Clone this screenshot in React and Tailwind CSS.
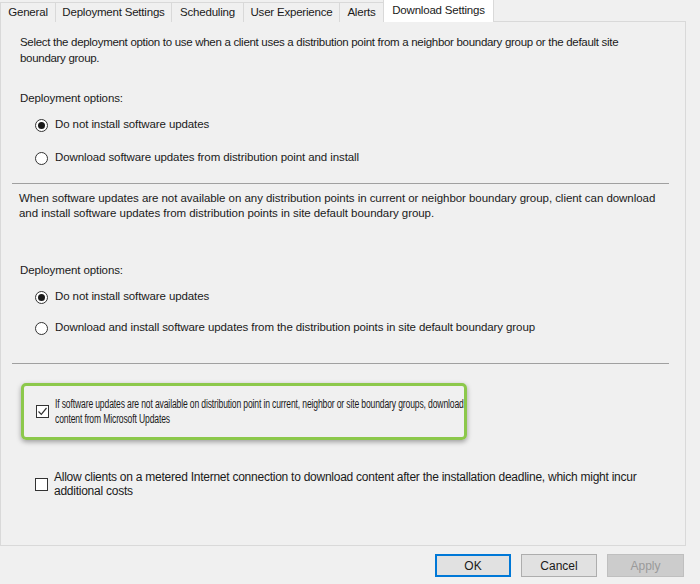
import React from "react";

function Radio({ checked }) {
  return (
    <span className="w-[13px] h-[13px] rounded-full border border-[#333] bg-white flex items-center justify-center shrink-0">
      {checked && <span className="w-[7px] h-[7px] rounded-full bg-[#1a1a1a]" />}
    </span>
  );
}

function Check({ checked }) {
  return (
    <span className="w-[13px] h-[13px] border border-[#333] bg-white flex items-center justify-center shrink-0">
      {checked && (
        <svg width="11" height="11" viewBox="0 0 11 11">
          <path d="M1.5 5.5 L4.3 8.3 L9.5 2" fill="none" stroke="#333" strokeWidth="1.2" />
        </svg>
      )}
    </span>
  );
}

export default function App() {
  const tabs = [
    ["General", "w-[56px]"],
    ["Deployment Settings", "w-[117px]"],
    ["Scheduling", "w-[73px]"],
    ["User Experience", "w-[97px]"],
    ["Alerts", "w-[45px]"],
  ];
  return (
    <div
      className="w-[700px] h-[584px] bg-[#f0f0f0] text-[#1a1a1a] text-[11.5px] overflow-hidden relative"
      style={{ fontFamily: '"Liberation Sans", Arial, sans-serif' }}
    >
      <div className="flex h-[22px] items-end tracking-[-0.2px]">
        {tabs.map(([t, w]) => (
          <div
            key={t}
            className={`${w} h-[20px] border border-b-0 border-[#d9d9d9] -ml-px first:ml-0 flex items-center justify-center bg-[#f0f0f0]`}
          >
            {t}
          </div>
        ))}
        <div className="w-[111px] h-[23px] border border-b-0 border-[#d9d9d9] -ml-px bg-white flex items-center justify-center relative z-10">
          Download Settings
        </div>
      </div>
      <div className="w-[686px] h-[525px] border border-[#d9d9d9] -mt-px bg-[#f0f0f0] flex flex-col">
        <div className="pl-[19px] pr-[30px] pt-[12px] leading-[16px] tracking-[-0.3px]">
          Select the deployment option to use when a client uses a distribution point from a neighbor boundary group or the default site boundary group.
        </div>
        <div className="pl-[19px] mt-[24px] leading-[16px] tracking-[-0.1px]">Deployment options:</div>
        <div className="pl-[34px] mt-[11px] flex items-center gap-[7px] h-[16px] tracking-[-0.1px]">
          <Radio checked />
          <span>Do not install software updates</span>
        </div>
        <div className="pl-[34px] mt-[17px] flex items-center gap-[7px] h-[16px] tracking-[-0.1px]">
          <Radio />
          <span>Download software updates from distribution point and install</span>
        </div>
        <div className="ml-[11px] w-[657px] h-px bg-[#a0a0a0] mt-[17px]" />
        <div className="pl-[18px] pr-[26px] mt-[7px] leading-[15px] tracking-[-0.05px]">
          When software updates are not available on any distribution points in current or neighbor boundary group, client can download and install software updates from distribution points in site default boundary group.
        </div>
        <div className="pl-[19px] mt-[41px] leading-[16px] tracking-[-0.1px]">Deployment options:</div>
        <div className="pl-[34px] mt-[11px] flex items-center gap-[7px] h-[16px] tracking-[-0.1px]">
          <Radio checked />
          <span>Do not install software updates</span>
        </div>
        <div className="pl-[34px] mt-[15px] flex items-center gap-[7px] h-[16px] tracking-[-0.1px]">
          <Radio />
          <span>Download and install software updates from the distribution points in site default boundary group</span>
        </div>
        <div className="ml-[11px] w-[657px] h-px bg-[#a0a0a0] mt-[27px]" />
        <div className="ml-[20px] mt-[19px] w-[446px] h-[57px] border-[3px] border-[#8cc84b] rounded-[5px] shadow-[0_2px_5px_rgba(0,0,0,0.35)] flex items-center pl-[12px] gap-[6px]">
          <Check checked />
          <span className="shrink-0 w-[580px] origin-left scale-x-[0.715] text-[12px] tracking-[-0.2px] leading-[15px] whitespace-nowrap">
            If software updates are not available on distribution point in current, neighbor or site boundary groups, download
            <br />
            content from Microsoft Updates
          </span>
        </div>
        <div className="ml-[34px] mt-[30px] flex items-center gap-[6px] pr-[40px] text-[12px] tracking-[-0.25px] leading-[14px]">
          <Check />
          <span>Allow clients on a metered Internet connection to download content after the installation deadline, which might incur additional costs</span>
        </div>
      </div>
      <div className="flex justify-end gap-[10px] pr-[16px] mt-[8px] text-[12px]">
        <button className="w-[76px] h-[23px] bg-[#e1e1e1] border-2 border-[#0078d7] flex items-center justify-center">OK</button>
        <button className="w-[76px] h-[23px] bg-[#e1e1e1] border border-[#adadad] flex items-center justify-center">Cancel</button>
        <button className="w-[77px] h-[23px] bg-[#cccccc] border border-[#bfbfbf] text-[#9a9a9a] flex items-center justify-center">Apply</button>
      </div>
    </div>
  );
}
